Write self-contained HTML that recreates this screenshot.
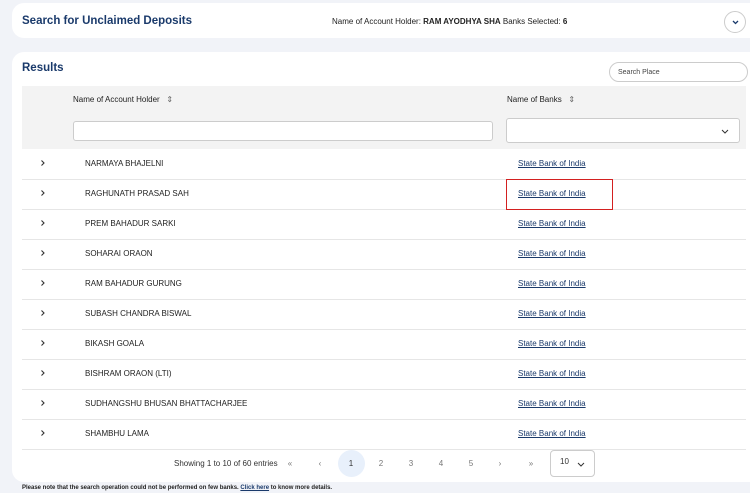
<!DOCTYPE html>
<html><head><meta charset="utf-8"><style>
*{box-sizing:border-box;margin:0;padding:0}
body{width:750px;height:493px;background:#f1f3f8;font-family:"Liberation Sans",sans-serif;position:relative;overflow:hidden;color:#222}
.a{position:absolute}
.card{background:#fff;border-radius:12px}
.t{font-size:8px;color:#222;white-space:nowrap}
.link{font-size:8px;color:#1a3a6b;text-decoration:underline;white-space:nowrap}
.line{height:1px;background:#e6e6e6;left:22px;width:724px}
.pg{font-size:8px;color:#777;width:26px;text-align:center}
</style></head><body>
<div class="a card" style="left:12px;top:3px;width:750px;height:35px"></div>
<div class="a" style="left:22px;top:15px;font-size:11.5px;font-weight:bold;color:#1a3a6b">Search for Unclaimed Deposits</div>
<div class="a t" style="left:332px;top:17px">Name of Account Holder: <b>RAM AYODHYA SHA</b> Banks Selected: <b>6</b></div>
<div class="a" style="left:724px;top:11px;width:22px;height:22px;border:1px solid #ccc;border-radius:50%"><svg class="a" style="left:7px;top:8px" width="7" height="5" viewBox="0 0 7 5"><path d="M1 1L3.5 3.5L6 1" fill="none" stroke="#1a3a6b" stroke-width="1.3"/></svg></div>

<div class="a card" style="left:12px;top:52px;width:750px;height:430px"></div>
<div class="a" style="left:22px;top:62px;font-size:11.5px;font-weight:bold;color:#1a3a6b">Results</div>
<div class="a" style="left:609px;top:62px;width:139px;height:20px;border:1px solid #ccc;border-radius:10px;font-size:7px;color:#444;padding:6px 0 0 8px">Search Place</div>
<div class="a" style="left:22px;top:86px;width:724px;height:63px;background:#f3f3f3"></div>
<div class="a t" style="left:73px;top:95px">Name of Account Holder &nbsp; <span style="color:#666">&#8661;</span></div>
<div class="a t" style="left:507px;top:95px">Name of Banks &nbsp; <span style="color:#666">&#8661;</span></div>
<div class="a" style="left:73px;top:121px;width:420px;height:20px;background:#fff;border:1px solid #ccc;border-radius:3px"></div>
<div class="a" style="left:506px;top:118px;width:234px;height:25px;background:#fff;border:1px solid #ccc;border-radius:3px"><svg class="a" style="left:214px;top:10px" width="8" height="5" viewBox="0 0 8 5"><path d="M1 1L4 4L7 1" fill="none" stroke="#333" stroke-width="1"/></svg></div>

<div id="rows"></div>
<script>
var n=["NARMAYA BHAJELNI","RAGHUNATH PRASAD SAH","PREM BAHADUR SARKI","SOHARAI ORAON","RAM BAHADUR GURUNG","SUBASH CHANDRA BISWAL","BIKASH GOALA","BISHRAM ORAON (LTI)","SUDHANGSHU BHUSAN BHATTACHARJEE","SHAMBHU LAMA"];
var h="";
for(var i=0;i<10;i++){var y=149+i*30;
h+='<svg class="a" style="left:41px;top:'+(y+11)+'px" width="4" height="6" viewBox="0 0 4 6"><path d="M0.5 0.5L3 3L0.5 5.5" fill="none" stroke="#333" stroke-width="1.1"/></svg>';
h+='<div class="a t" style="left:85px;top:'+(y+10)+'px">'+n[i]+'</div>';
h+='<div class="a link" style="left:518px;top:'+(y+10)+'px">State Bank of India</div>';
h+='<div class="a line" style="top:'+(y+30)+'px"></div>';}
document.getElementById("rows").innerHTML=h;
</script>
<div class="a" style="left:506px;top:179px;width:107px;height:31px;border:1.5px solid #d32020"></div>

<div class="a t" style="left:174px;top:459px;color:#333">Showing 1 to 10 of 60 entries</div>
<div class="a pg" style="left:277px;top:459px">&laquo;</div>
<div class="a pg" style="left:307px;top:459px">&lsaquo;</div>
<div class="a" style="left:338px;top:450px;width:27px;height:27px;border-radius:50%;background:#e8f0fb"></div>
<div class="a pg" style="left:338px;top:459px;color:#333">1</div>
<div class="a pg" style="left:368px;top:459px">2</div>
<div class="a pg" style="left:398px;top:459px">3</div>
<div class="a pg" style="left:428px;top:459px">4</div>
<div class="a pg" style="left:458px;top:459px">5</div>
<div class="a pg" style="left:487px;top:459px">&rsaquo;</div>
<div class="a pg" style="left:518px;top:459px">&raquo;</div>
<div class="a" style="left:550px;top:450px;width:45px;height:27px;border:1px solid #ccc;border-radius:4px;font-size:8px;padding:6px 0 0 9px;color:#333">10<svg class="a" style="left:26px;top:11px" width="8" height="5" viewBox="0 0 8 5"><path d="M1 1L4 4L7 1" fill="none" stroke="#333" stroke-width="1"/></svg></div>
<div class="a" style="left:22px;top:485px;font-size:6px;font-weight:bold;color:#222;white-space:nowrap">Please note that the search operation could not be performed on few banks. <span style="color:#1a3a6b;text-decoration:underline">Click here</span> to know more details.</div>
</body></html>
